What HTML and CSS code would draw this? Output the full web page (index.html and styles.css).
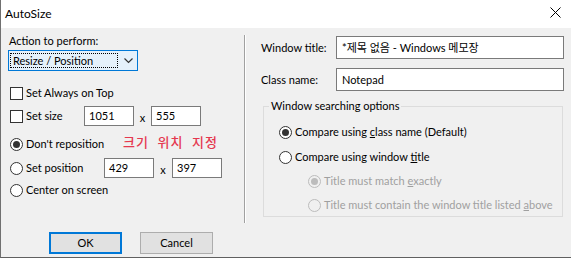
FILE: index.html
```html
<!DOCTYPE html>
<html lang="ko">
  <head>
    <meta charset="UTF-8" />
    <title>AutoSize</title>
    <link rel="stylesheet" href="styles.css">
  </head>
  <body>
    <div class="window">
      <div class="titlebar">
        <span class="title">AutoSize</span>
        <svg class="close" width="11" height="11" viewBox="0 0 11 11">
          <path d="M0.5 0.5 L10.5 10.5 M10.5 0.5 L0.5 10.5" stroke="#000" stroke-width="1" fill="none" />
        </svg>
      </div>

      <div class="content">
        <!-- left side: action options -->
        <div class="left">
          <div class="row label-row">Action to perform:</div>
          <div class="select">
            <span class="select-text">Resize / Position</span>
            <svg class="chevron" width="9" height="6" viewBox="0 0 9 6">
              <path d="M0.5 0.5 L4.5 4.5 L8.5 0.5" stroke="#333" stroke-width="1.2" fill="none" />
            </svg>
          </div>

          <div class="row row-top">
            <span class="check"></span>
            <span>Set Always on Top</span>
          </div>

          <div class="row row-size">
            <span class="lbl lbl-size"><span class="check"></span><span>Set size</span></span>
            <span class="field">1051</span>
            <span class="by">x</span>
            <span class="field">555</span>
          </div>

          <div class="row row-norepos">
            <span class="lbl lbl-norepos"><span class="radio checked"></span><span>Don't reposition</span></span>
            <span class="note">크기 위치 지정</span>
          </div>

          <div class="row row-pos">
            <span class="lbl lbl-pos"><span class="radio"></span><span>Set position</span></span>
            <span class="field">429</span>
            <span class="by by-pos">x</span>
            <span class="field">397</span>
          </div>

          <div class="row row-center">
            <span class="radio"></span>
            <span>Center on screen</span>
          </div>

          <div class="buttons">
            <span class="btn btn-default">OK</span>
            <span class="btn">Cancel</span>
          </div>
        </div>

        <div class="divider"></div>

        <!-- right side: window matching -->
        <div class="right">
          <div class="row row-title">
            <span class="rlbl">Window title:</span>
            <span class="wide">*제목 없음 - Windows 메모장</span>
          </div>
          <div class="row row-class">
            <span class="rlbl">Class name:</span>
            <span class="wide">Notepad</span>
          </div>

          <fieldset class="group">
            <legend>Window searching options</legend>
            <div class="row opt opt-first">
              <span class="radio checked"></span>
              <span>Compare using <u>c</u>lass name (Default)</span>
            </div>
            <div class="row opt">
              <span class="radio"></span>
              <span>Compare using window <u>t</u>itle</span>
            </div>
            <div class="row opt sub disabled">
              <span class="radio checked"></span>
              <span>Title must match <u>e</u>xactly</span>
            </div>
            <div class="row opt sub disabled">
              <span class="radio"></span>
              <span>Title must contain the window title listed <u>a</u>bove</span>
            </div>
          </fieldset>
        </div>
      </div>
    </div>
  </body>
</html>
```

FILE: styles.css
```css
body {
  margin: 0;
  background-color: #ffffff;
  font-family: Lato, "Noto Sans CJK KR", sans-serif;
  font-size: 11px;
  color: #000000;
}
.window {
  width: 570px;
  height: 257px;
  border-left: 1px solid #707070;
  border-bottom: 1px solid #606060;
  background-color: #f0f0f0;
  overflow: hidden;
}
.titlebar {
  height: 28px;
  background-color: #ffffff;
  display: flex;
  align-items: center;
  justify-content: space-between;
}
.title {
  margin-left: 4px;
  margin-top: -2px;
  font-size: 12px;
}
.close {
  margin-right: 10px;
  margin-top: -4px;
}
.content {
  display: flex;
  padding-left: 7px;
}
.left {
  width: 236px;
}
.row {
  display: flex;
  align-items: center;
  height: 14px;
  line-height: 14px;
  white-space: nowrap;
}
.label-row {
  margin-top: 6px;
  padding-left: 1px;
}
.select {
  margin-top: 2px;
  width: 128px;
  height: 19px;
  border: 1px solid #0078d7;
  background-color: #e5f1fb;
  display: flex;
  align-items: center;
  justify-content: space-between;
}
.select-text {
  margin-left: 2px;
  width: 104px;
  height: 13px;
  line-height: 13px;
  padding-left: 2px;
  outline: 1px dotted #000;
  outline-offset: 0;
}
.chevron {
  margin-right: 4px;
}
.check,
.radio {
  width: 11px;
  height: 11px;
  border: 1px solid #333333;
  background-color: #ffffff;
  margin-right: 3px;
  flex: none;
  box-sizing: content-box;
}
.radio {
  border-radius: 50%;
  display: flex;
  align-items: center;
  justify-content: center;
}
.radio.checked::after {
  content: "";
  width: 7px;
  height: 7px;
  border-radius: 50%;
  background-color: #333333;
}
.row-top {
  margin-top: 15px;
  padding-left: 2px;
}
.row-size,
.row-pos {
  height: 20px;
}
.row-size {
  margin-top: 6px;
  padding-left: 2px;
}
.lbl {
  display: flex;
  align-items: center;
}
.lbl-size {
  width: 74px;
}
.lbl-norepos {
  width: 113px;
}
.lbl-pos {
  width: 94px;
}
.field {
  width: 44px;
  height: 18px;
  line-height: 18px;
  border: 1px solid #7a7a7a;
  background-color: #ffffff;
  padding-left: 4px;
}
.by {
  width: 17px;
  text-align: center;
  margin-top: 3px;
}
.by-pos {
  width: 18px;
}
.row-norepos {
  margin-top: 11px;
  padding-left: 2px;
}
.note {
  font-family: "Noto Sans CJK KR", sans-serif;
  font-size: 13px;
  font-weight: 500;
  color: #e5384f;
  letter-spacing: 1px;
  word-spacing: 4px;
  margin-top: -5px;
}
.row-pos {
  margin-top: 7px;
  padding-left: 2px;
}
.row-center {
  margin-top: 5px;
  padding-left: 2px;
}
.buttons {
  display: flex;
  gap: 18px;
  margin-top: 35px;
  margin-left: 41px;
}
.btn {
  width: 71px;
  height: 20px;
  line-height: 20px;
  text-align: center;
  background-color: #e1e1e1;
  border: 1px solid #adadad;
}
.btn-default {
  width: 69px;
  height: 18px;
  line-height: 18px;
  border: 2px solid #0078d7;
}
.divider {
  width: 0;
  height: 188px;
  margin-top: 7px;
  border-left: 1px solid #a0a0a0;
  border-right: 1px solid #ffffff;
}
.right {
  padding-left: 15px;
  width: 303px;
}
.rlbl {
  width: 75px;
}
.row-title,
.row-class {
  height: 23px;
}
.row-title {
  margin-top: 8px;
}
.row-class {
  margin-top: 9px;
}
.wide {
  width: 221px;
  height: 21px;
  line-height: 21px;
  border: 1px solid #7a7a7a;
  background-color: #ffffff;
  padding-left: 5px;
}
.group {
  margin: 8px 0 0 2px;
  padding: 0 0 0 15px;
  width: 283px;
  min-width: 0;
  height: 116px;
  border: 1px solid #dcdcdc;
  box-sizing: content-box;
}
.group legend {
  padding: 0 2px;
  margin-left: -10px;
  line-height: 14px;
}
.opt {
  margin-top: 11px;
}
.opt-first {
  margin-top: 12px;
}
.sub {
  margin-left: 29px;
}
.opt + .sub {
  margin-top: 10px;
}
.disabled {
  color: #a0a0a0;
}
.disabled .radio {
  border-color: #bcbcbc;
  background-color: #f0f0f0;
}
.disabled .radio.checked::after {
  background-color: #bcbcbc;
}
```
